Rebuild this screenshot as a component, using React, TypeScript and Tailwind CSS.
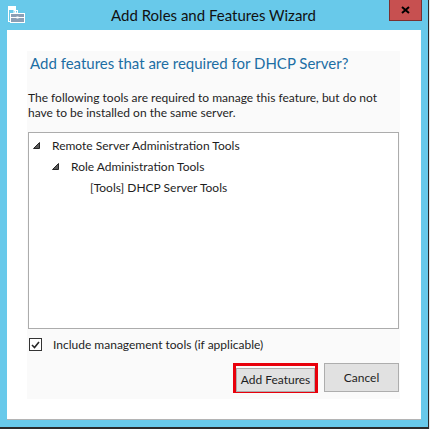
import React from 'react';

const font = { fontFamily: '"Segoe UI", Lato, "Noto Sans", sans-serif' };

function WizardIcon() {
    return (
        <svg width="18" height="18" viewBox="0 0 18 18" className="shrink-0">
            {/* server tower */}
            <rect x="0.5" y="0.5" width="7" height="15" fill="#68c9ea" stroke="#ffffff" strokeWidth="1" />
            <rect x="1" y="1" width="6" height="3" fill="#ffffff" />
            {/* toolbox */}
            <rect x="6" y="4.5" width="3.5" height="2.5" fill="none" stroke="#ffffff" strokeWidth="1" />
            <rect x="2.5" y="7.5" width="14" height="9" fill="#8a9fb6" stroke="#ffffff" strokeWidth="1" />
            <line x1="3" y1="11.5" x2="16" y2="11.5" stroke="#ffffff" strokeWidth="1" />
            <rect x="8.5" y="10.5" width="2" height="2" fill="#ffffff" />
        </svg>
    );
}

function ExpandedArrow() {
    return (
        <svg width="7" height="7" viewBox="0 0 7 7" className="shrink-0">
            <polygon points="6.5,0.5 6.5,6.5 0.5,6.5" fill="#5a5a5a" stroke="#262626" strokeWidth="1" />
        </svg>
    );
}

interface TreeRow {
    label: string;
    indent: number;
    expandable: boolean;
}

const rows: TreeRow[] = [
    { label: 'Remote Server Administration Tools', indent: 0, expandable: true },
    { label: 'Role Administration Tools', indent: 1, expandable: true },
    { label: '[Tools] DHCP Server Tools', indent: 2, expandable: false },
];

export default function App() {
    return (
        <div className="flex w-[430px] h-[429px] bg-[#e9e9e9]" style={font}>
            <div className="flex flex-col w-[429px] h-[429px] bg-[#68c9ea] border-r border-b-2 border-[#2b2b2b]">
                {/* Title bar */}
                <div className="relative flex items-center h-[30px] shrink-0">
                    <div className="absolute left-[8px] top-[6px]">
                        <WizardIcon />
                    </div>
                    <div className="flex-1 text-center text-[15px] leading-[30px] text-[#111111] pr-[1px]">
                        Add Roles and Features Wizard
                    </div>
                    <div className="absolute left-[389px] top-0 w-[33px] h-[21px] bg-[#c75050] border border-t-0 border-[#7a3030] flex items-center justify-center">
                        <svg width="9" height="8" viewBox="0 0 9 8">
                            <path d="M1 1 L8 7 M8 1 L1 7" stroke="#000000" strokeWidth="2" />
                        </svg>
                    </div>
                </div>

                {/* Client area */}
                <div className="ml-[7px] w-[414px] h-[390px] bg-white border-b border-[#b4b4b4] pt-[21px] pl-[20px]">
                    <div className="flex flex-col w-[373px] h-[348px] bg-[#fafafa] px-[1px] pt-[1px]">
                        <div className="h-[22px] leading-[22px] text-[15px] text-[#1c6ea4] pl-[2px] whitespace-nowrap">
                            Add features that are required for DHCP Server?
                        </div>
                        <p className="mt-[16px] text-[12px] leading-[15px] text-[#1e1e1e] whitespace-nowrap">
                            The following tools are required to manage this feature, but do not
                            <br />
                            have to be installed on the same server.
                        </p>

                        {/* Tree */}
                        <div className="mt-[12px] h-[197px] bg-white border border-[#acacac] pt-[2px]">
                            {rows.map((row) => (
                                <div
                                    key={row.label}
                                    className={
                                        row.indent === 0
                                            ? 'flex items-center h-[21px] pl-[4px]'
                                            : row.indent === 1
                                              ? 'flex items-center h-[21px] pl-[23px]'
                                              : 'flex items-center h-[21px] pl-[49px]'
                                    }
                                >
                                    {row.expandable && <ExpandedArrow />}
                                    <span className="ml-[12px] text-[12px] text-[#1e1e1e] whitespace-nowrap">{row.label}</span>
                                </div>
                            ))}
                        </div>

                        {/* Checkbox */}
                        <label className="mt-[8px] flex items-center h-[15px]">
                            <span className="ml-[1px] w-[13px] h-[13px] border border-[#333333] bg-white flex items-center justify-center">
                                <svg width="9" height="8" viewBox="0 0 9 8">
                                    <path d="M1 4 L3.5 6.5 L8 1" fill="none" stroke="#262626" strokeWidth="1.6" />
                                </svg>
                            </span>
                            <span className="ml-[11px] text-[12px] text-[#1e1e1e]">Include management tools (if applicable)</span>
                        </label>

                        {/* Buttons */}
                        <div className="mt-[11px] flex justify-end items-start gap-[6px]">
                            <div className="w-[85px] h-[30px] border-[3px] border-[#e8000b]">
                                <button className="w-full h-full bg-[#e1e1e1] border border-[#adadad] text-[12px] text-[#1e1e1e]">
                                    Add Features
                                </button>
                            </div>
                            <button className="w-[75px] h-[29px] bg-[#e1e1e1] border border-[#adadad] text-[12px] text-[#1e1e1e]">
                                Cancel
                            </button>
                        </div>
                    </div>
                </div>
            </div>
        </div>
    );
}
